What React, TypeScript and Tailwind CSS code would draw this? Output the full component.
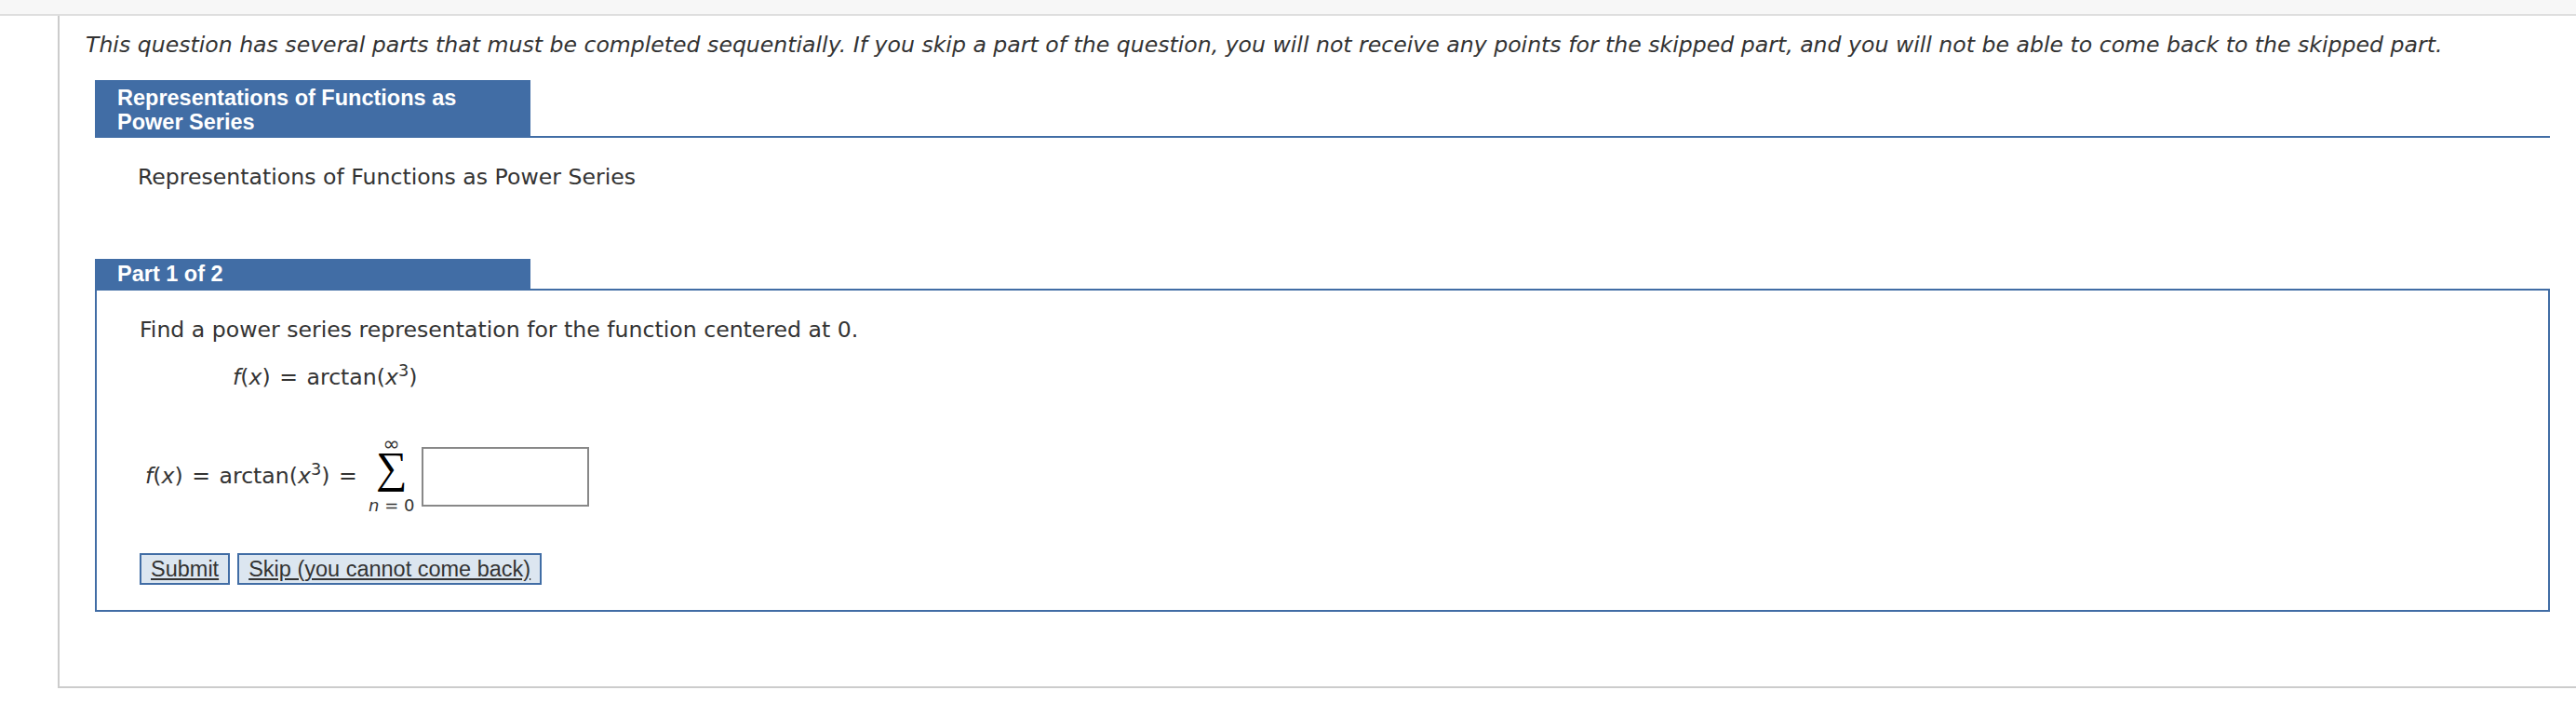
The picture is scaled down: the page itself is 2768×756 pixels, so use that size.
import React from 'react';

const blue = 'bg-[#416da5]';

function Tab({ children }: { children: React.ReactNode }) {
  return (
    <div className="w-[468px] shrink-0 bg-[#416da5] pl-6 pr-[60px] font-['Liberation_Sans',Arial,sans-serif] text-[23.5px] font-bold leading-[26px] text-white">
      {children}
    </div>
  );
}

function Fx() {
  return (
    <>
      <i>f</i>(<i>x</i>) <span className="mx-[2px]">=</span> arctan(<i>x</i>
      <sup>3</sup>)
    </>
  );
}

export default function App() {
  return (
    <div className="min-h-[756px] w-[2768px] bg-white font-['DejaVu_Sans',Verdana,sans-serif] text-[23.6px] leading-[27px] text-[#333333]">
      <div className="h-[17px] border-b-2 border-[#dedede] bg-[#f7f7f7]" />

      <div className="ml-[62px] h-[722px] border-b-2 border-l-2 border-[#cccccc] pl-[28px] pr-[28px] pt-[18px]">
        <p className="italic">
          This question has several parts that must be completed sequentially. If you skip a part of the question, you
          will not receive any points for the skipped part, and you will not be able to come back to the skipped part.
        </p>

        <div className="ml-[10px] mt-[24px]">
          {/* section header */}
          <div className="flex items-end">
            <Tab>
              <div className="pb-[4px] pt-[6px]">Representations of Functions as Power Series</div>
            </Tab>
            <div className={`h-[2px] flex-1 ${blue}`} />
          </div>

          <p className="mt-[29px] pl-[46px]">Representations of Functions as Power Series</p>

          {/* part 1 */}
          <div className="mt-[74px]">
            <Tab>
              <div className="py-[3px]">Part 1 of 2</div>
            </Tab>
            <div className="border-2 border-[#416da5] pb-[27px] pl-[46px] pt-[29px]">
              <p>Find a power series representation for the function centered at 0.</p>
              <p className="ml-[100px] mt-[24px]">
                <Fx />
              </p>

              <div className="mt-[51px] flex items-center">
                <span className="ml-[6px]">
                  <Fx /> <span className="mx-[2px]">=</span>
                </span>
                <div className="ml-[8px] flex w-[54px] flex-col items-center">
                  <span className="text-[22px] leading-[14px]">∞</span>
                  <span className="mt-[3px] flex h-[42px] items-center font-['Liberation_Serif',serif] text-[47px] leading-[30px] text-black">
                    <span className="block -translate-y-[6px]">∑</span>
                  </span>
                  <span className="mt-[4px] text-[18px] leading-[20px]">
                    <i>n</i> = 0
                  </span>
                </div>
                <div className="ml-[5px] h-[64px] w-[180px] border-2 border-[#888888] bg-white" />
              </div>

              <div className="mt-[41px] flex gap-[8px] font-['Liberation_Sans',Arial,sans-serif] text-[23.5px] leading-[26px]">
                <button className="border-2 border-[#416da5] bg-[#dce6f0] px-[10px] py-[2px] text-[#333333] underline">
                  Submit
                </button>
                <button className="border-2 border-[#416da5] bg-[#dce6f0] px-[10px] py-[2px] text-[#333333] underline">
                  Skip (you cannot come back)
                </button>
              </div>
            </div>
          </div>
        </div>
      </div>
    </div>
  );
}
